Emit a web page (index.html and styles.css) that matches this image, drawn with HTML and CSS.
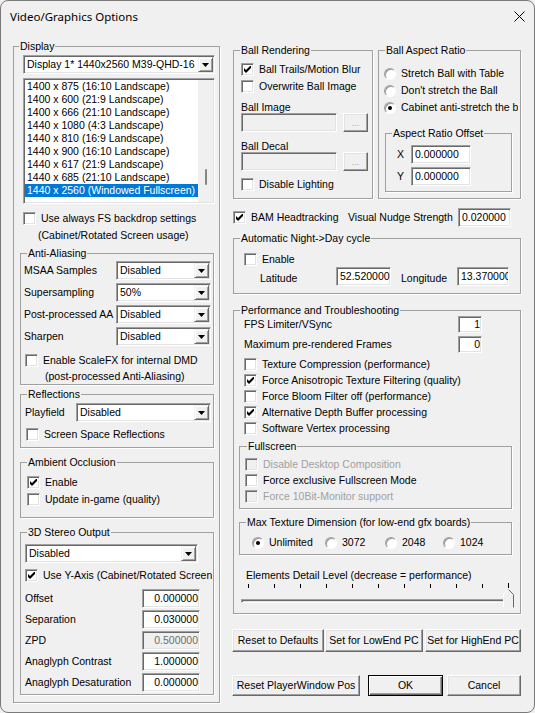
FILE: index.html
```html
<!DOCTYPE html>
<html>
<head>
<meta charset="utf-8">
<title>Video/Graphics Options</title>
<link rel="stylesheet" href="styles.css">
</head>
<body>
<div class="window">
  <div class="titlebar">
    <span class="title">Video/Graphics Options</span>
    <svg class="close" width="11" height="11" viewBox="0 0 11 11"><path d="M0.5 0.5 L10.5 10.5 M10.5 0.5 L0.5 10.5" stroke="#000" stroke-width="1" fill="none"/></svg>
  </div>
  <div class="client">
    <!-- LEFT COLUMN -->
    <div class="leftcol">
      <fieldset class="gb g-display">
        <legend class="lg-display">Display</legend>
        <div class="disp-body">
          <div class="combo c-display"><span class="combo-text">Display 1* 1440x2560 M39-QHD-16</span><span class="combo-btn"><svg width="7" height="4" viewBox="0 0 7 4"><polygon points="0,0 7,0 3.5,4" fill="#000"/></svg></span></div>
          <div class="listbox">
            <div class="list-items">
              <div class="li">1400 x 875 (16:10 Landscape)</div>
              <div class="li">1400 x 600 (21:9 Landscape)</div>
              <div class="li">1400 x 666 (21:10 Landscape)</div>
              <div class="li">1440 x 1080 (4:3 Landscape)</div>
              <div class="li">1440 x 810 (16:9 Landscape)</div>
              <div class="li">1440 x 900 (16:10 Landscape)</div>
              <div class="li">1440 x 617 (21:9 Landscape)</div>
              <div class="li">1440 x 685 (21:10 Landscape)</div>
              <div class="li sel">1440 x 2560 (Windowed Fullscreen)</div>
            </div>
            <div class="vscroll"><div class="vthumb"></div></div>
          </div>
          <div class="cb cb-fs"><span class="box"></span><span class="lbl">Use always FS backdrop settings</span></div>
          <div class="note note-fs">(Cabinet/Rotated Screen usage)</div>

          <fieldset class="gb g-aa">
            <legend>Anti-Aliasing</legend>
            <div class="aa-body">
              <div class="frow"><span class="flabel w92">MSAA Samples</span><div class="combo w95"><span class="combo-text">Disabled</span><span class="combo-btn"><svg width="7" height="4" viewBox="0 0 7 4"><polygon points="0,0 7,0 3.5,4" fill="#000"/></svg></span></div></div>
              <div class="frow"><span class="flabel w92">Supersampling</span><div class="combo w95"><span class="combo-text">50%</span><span class="combo-btn"><svg width="7" height="4" viewBox="0 0 7 4"><polygon points="0,0 7,0 3.5,4" fill="#000"/></svg></span></div></div>
              <div class="frow"><span class="flabel w92">Post-processed AA</span><div class="combo w95"><span class="combo-text">Disabled</span><span class="combo-btn"><svg width="7" height="4" viewBox="0 0 7 4"><polygon points="0,0 7,0 3.5,4" fill="#000"/></svg></span></div></div>
              <div class="frow"><span class="flabel w92">Sharpen</span><div class="combo w95"><span class="combo-text">Disabled</span><span class="combo-btn"><svg width="7" height="4" viewBox="0 0 7 4"><polygon points="0,0 7,0 3.5,4" fill="#000"/></svg></span></div></div>
              <div class="cb cb-scalefx"><span class="box"></span><span class="lbl">Enable ScaleFX for internal DMD</span></div>
              <div class="note note-scalefx">(post-processed Anti-Aliasing)</div>
            </div>
          </fieldset>

          <fieldset class="gb g-refl">
            <legend>Reflections</legend>
            <div class="refl-body">
              <div class="frow"><span class="flabel w51">Playfield</span><div class="combo w135"><span class="combo-text">Disabled</span><span class="combo-btn"><svg width="7" height="4" viewBox="0 0 7 4"><polygon points="0,0 7,0 3.5,4" fill="#000"/></svg></span></div></div>
              <div class="cb cb-ssr"><span class="box"></span><span class="lbl">Screen Space Reflections</span></div>
            </div>
          </fieldset>

          <fieldset class="gb g-ao">
            <legend>Ambient Occlusion</legend>
            <div class="ao-body">
              <div class="cb"><span class="box"><svg class="chk" width="7" height="7" viewBox="0 0 7 7"><polygon points="0,2 2,4 7,-1 7,2 2,7 0,5" fill="#000"/></svg></span><span class="lbl">Enable</span></div>
              <div class="cb mt4"><span class="box"></span><span class="lbl">Update in-game (quality)</span></div>
            </div>
          </fieldset>

          <fieldset class="gb g-3d">
            <legend>3D Stereo Output</legend>
            <div class="s3d-body">
              <div class="combo w173"><span class="combo-text">Disabled</span><span class="combo-btn"><svg width="7" height="4" viewBox="0 0 7 4"><polygon points="0,0 7,0 3.5,4" fill="#000"/></svg></span></div>
              <div class="cb cb-yaxis"><span class="box"><svg class="chk" width="7" height="7" viewBox="0 0 7 7"><polygon points="0,2 2,4 7,-1 7,2 2,7 0,5" fill="#000"/></svg></span><span class="lbl">Use Y-Axis (Cabinet/Rotated Screen usage)</span></div>
              <div class="frow srow first"><span class="flabel w117">Offset</span><div class="edit r w58">0.000000</div></div>
              <div class="frow srow"><span class="flabel w117">Separation</span><div class="edit r w58">0.030000</div></div>
              <div class="frow srow"><span class="flabel w117">ZPD</span><div class="edit r w58 dis">0.500000</div></div>
              <div class="frow srow"><span class="flabel w117">Anaglyph Contrast</span><div class="edit r w58">1.000000</div></div>
              <div class="frow srow"><span class="flabel w117">Anaglyph Desaturation</span><div class="edit r w58">0.000000</div></div>
            </div>
          </fieldset>
        </div>
      </fieldset>
    </div>

    <!-- RIGHT COLUMN -->
    <div class="rightcol">
      <div class="toprow">
        <fieldset class="gb g-ball">
          <legend>Ball Rendering</legend>
          <div class="ball-body">
            <div class="cb"><span class="box"><svg class="chk" width="7" height="7" viewBox="0 0 7 7"><polygon points="0,2 2,4 7,-1 7,2 2,7 0,5" fill="#000"/></svg></span><span class="lbl">Ball Trails/Motion Blur</span></div>
            <div class="cb mt4"><span class="box"></span><span class="lbl">Overwrite Ball Image</span></div>
            <div class="blabel mt8">Ball Image</div>
            <div class="filerow"><div class="edit dis w96"></div><div class="btn dots">...</div></div>
            <div class="blabel mt8">Ball Decal</div>
            <div class="filerow"><div class="edit dis w96"></div><div class="btn dots">...</div></div>
            <div class="cb mt7"><span class="box"></span><span class="lbl">Disable Lighting</span></div>
          </div>
        </fieldset>
        <fieldset class="gb g-aspect">
          <legend>Ball Aspect Ratio</legend>
          <div class="aspect-body">
            <div class="rb"><span class="radio"></span><span class="lbl">Stretch Ball with Table</span></div>
            <div class="rb mt4"><span class="radio"></span><span class="lbl">Don't stretch the Ball</span></div>
            <div class="rb mt4 rb-clip"><span class="radio on"></span><span class="lbl">Cabinet anti-stretch the ball</span></div>
            <fieldset class="gb g-aro">
              <legend>Aspect Ratio Offset</legend>
              <div class="aro-body">
                <div class="frow"><span class="flabel w14">X</span><div class="edit w60">0.000000</div></div>
                <div class="frow mt3"><span class="flabel w14">Y</span><div class="edit w60">0.000000</div></div>
              </div>
            </fieldset>
          </div>
        </fieldset>
      </div>

      <div class="frow bamrow">
        <div class="cb w115"><span class="box"><svg class="chk" width="7" height="7" viewBox="0 0 7 7"><polygon points="0,2 2,4 7,-1 7,2 2,7 0,5" fill="#000"/></svg></span><span class="lbl">BAM Headtracking</span></div>
        <span class="flabel w110">Visual Nudge Strength</span>
        <div class="edit w53">0.020000</div>
      </div>

      <fieldset class="gb g-night">
        <legend>Automatic Night-&gt;Day cycle</legend>
        <div class="night-body">
          <div class="cb"><span class="box"></span><span class="lbl">Enable</span></div>
          <div class="latrow">
            <span class="flabel lat-l">Latitude</span>
            <div class="edit w55">52.520000</div>
            <span class="flabel lon-l">Longitude</span>
            <div class="edit w52">13.370000</div>
          </div>
        </div>
      </fieldset>

      <fieldset class="gb g-perf">
        <legend>Performance and Troubleshooting</legend>
        <div class="perf-body">
          <div class="prow"><span class="flabel w214">FPS Limiter/VSync</span><div class="edit r small w24">1</div></div>
          <div class="prow mt3"><span class="flabel w214">Maximum pre-rendered Frames</span><div class="edit r small w24">0</div></div>
          <div class="cb pcb mt5"><span class="box"></span><span class="lbl">Texture Compression (performance)</span></div>
          <div class="cb pcb mt3"><span class="box"><svg class="chk" width="7" height="7" viewBox="0 0 7 7"><polygon points="0,2 2,4 7,-1 7,2 2,7 0,5" fill="#000"/></svg></span><span class="lbl">Force Anisotropic Texture Filtering (quality)</span></div>
          <div class="cb pcb mt3"><span class="box"></span><span class="lbl">Force Bloom Filter off (performance)</span></div>
          <div class="cb pcb mt3"><span class="box"><svg class="chk" width="7" height="7" viewBox="0 0 7 7"><polygon points="0,2 2,4 7,-1 7,2 2,7 0,5" fill="#000"/></svg></span><span class="lbl">Alternative Depth Buffer processing</span></div>
          <div class="cb pcb mt3"><span class="box"></span><span class="lbl">Software Vertex processing</span></div>

          <fieldset class="gb g-fs">
            <legend class="lg-fs">Fullscreen</legend>
            <div class="fs-body">
              <div class="cb disabled"><span class="box dis"></span><span class="lbl">Disable Desktop Composition</span></div>
              <div class="cb mt3"><span class="box"></span><span class="lbl">Force exclusive Fullscreen Mode</span></div>
              <div class="cb mt3 disabled"><span class="box dis"></span><span class="lbl">Force 10Bit-Monitor support</span></div>
            </div>
          </fieldset>

          <fieldset class="gb g-mtd">
            <legend>Max Texture Dimension (for low-end gfx boards)</legend>
            <div class="mtd-body">
              <div class="rb w73"><span class="radio on"></span><span class="lbl">Unlimited</span></div>
              <div class="rb w60"><span class="radio"></span><span class="lbl">3072</span></div>
              <div class="rb w58"><span class="radio"></span><span class="lbl">2048</span></div>
              <div class="rb"><span class="radio"></span><span class="lbl">1024</span></div>
            </div>
          </fieldset>

          <div class="edl">Elements Detail Level (decrease = performance)</div>
          <div class="slider">
            <div class="ticks">
              <span class="tick"></span><span class="tick"></span><span class="tick"></span><span class="tick"></span><span class="tick"></span><span class="tick"></span><span class="tick"></span><span class="tick"></span><span class="tick"></span><span class="tick"></span><span class="tick last"></span>
            </div>
            <div class="track"></div>
            <svg class="sthumb" width="11" height="19" viewBox="0 0 11 19">
              <path d="M0.5 18.5 V5.5 L5.5 0.5 L10.5 5.5 V18.5 Z" fill="#f0f0f0"/>
              <path d="M0.5 18.5 V5.5 L5.5 0.5" stroke="#fff" fill="none"/>
              <path d="M5.5 0.5 L10.5 5.5 V18.5" stroke="#696969" fill="none"/>
            </svg>
          </div>
        </div>
      </fieldset>

      <div class="btnrow row1">
        <div class="btn b92">Reset to Defaults</div>
        <div class="btn b98">Set for LowEnd PC</div>
        <div class="btn b96">Set for HighEnd PC</div>
      </div>
      <div class="btnrow row2">
        <div class="btn b128">Reset PlayerWindow Pos</div>
        <div class="btn def b75">OK</div>
        <div class="btn b74">Cancel</div>
      </div>
    </div>
  </div>
</div>
</body>
</html>
```

FILE: styles.css
```css
* { box-sizing: border-box; }
html, body { margin: 0; padding: 0; }
body {
  font-family: "Liberation Sans", Arial, sans-serif;
  font-size: 10.5px;
  line-height: 13px;
  color: #000;
  background: #f0f0f0;
}

.window {
  width: 535px;
  height: 713px;
  border: 1px solid #7a7a7a;
  border-radius: 8px;
  background: #f0f0f0;
  overflow: hidden;
}

.titlebar {
  height: 30px;
  display: flex;
  align-items: center;
  justify-content: space-between;
  padding: 0 9px 0 9px;
}
.title {
  font-family: "Noto Sans", "Open Sans", sans-serif;
  font-size: 11.5px;
  line-height: 16px;
  margin-top: 1px;
}
.close { display: block; margin-top: 1px; }

.client {
  display: flex;
  padding-left: 12px;
  gap: 13px;
}
.leftcol { width: 207px; margin-top: 9px; }
.rightcol { width: 289px; margin-top: 13px; }

/* group boxes */
.gb {
  margin: 0;
  padding: 0;
  border: 1px solid #a0a0a0;
  min-width: 0;
  display: block;
  box-shadow: 1px 1px 0 #fff;
}
.gb > legend {
  padding: 0 1px;
  margin-left: 6px;
  line-height: 12px;
  height: 12px;
  font-size: 10.5px;
  white-space: nowrap;
}
.gb > legend.lg-display { margin-left: 5px; }
.gb > legend.lg-fs { margin-left: 7px; }

/* common controls */
.cb, .rb {
  display: flex;
  align-items: center;
  height: 13px;
  white-space: nowrap;
}
.cb .lbl, .rb .lbl { margin-left: 5px; line-height: 13px; margin-top: -1px; }
.cb.disabled .lbl { color: #a0a0a0; }

.box {
  width: 13px;
  height: 13px;
  flex: none;
  background: #fff;
  border: 1px solid;
  border-color: #a0a0a0 #fff #fff #a0a0a0;
  box-shadow: inset 1px 1px 0 #696969, inset -1px -1px 0 #e3e3e3;
  display: flex;
  align-items: center;
  justify-content: center;
}
.box.dis { background: #f0f0f0; }
.chk { display: block; }

.radio {
  width: 12px;
  height: 12px;
  flex: none;
  border-radius: 50%;
  background: #fff;
  border: 1px solid;
  border-color: #a0a0a0 #fff #fff #a0a0a0;
  box-shadow: inset 1px 1px 0 #9a9a9a;
  display: flex;
  align-items: center;
  justify-content: center;
}
.radio.on::after {
  content: "";
  width: 4px;
  height: 4px;
  border-radius: 50%;
  background: #000;
}

.edit {
  height: 19px;
  background: #fff;
  border: 1px solid;
  border-color: #a0a0a0 #fff #fff #a0a0a0;
  box-shadow: inset 1px 1px 0 #696969, inset -1px -1px 0 #e3e3e3;
  padding: 0 1px 0 3px;
  line-height: 17px;
  overflow: hidden;
  white-space: nowrap;
  flex: none;
}
.edit.r { text-align: right; padding: 0 1px 0 1px; }
.edit.dis { background: #f0f0f0; color: #6d6d6d; }
.edit.small { height: 17px; line-height: 15px; }

.combo {
  height: 19px;
  display: flex;
  background: #fff;
  border: 1px solid;
  border-color: #a0a0a0 #fff #fff #a0a0a0;
  box-shadow: inset 1px 1px 0 #696969, inset -1px -1px 0 #e3e3e3;
  padding: 1px;
  flex: none;
}
.combo-text {
  flex: 1;
  min-width: 0;
  padding-left: 2px;
  line-height: 15px;
  overflow: hidden;
  white-space: nowrap;
}
.combo-btn {
  width: 15px;
  height: 15px;
  flex: none;
  background: #f0f0f0;
  border: 1px solid;
  border-color: #f0f0f0 #696969 #696969 #f0f0f0;
  box-shadow: inset 1px 1px 0 #fff, inset -1px -1px 0 #a0a0a0;
  display: flex;
  align-items: center;
  justify-content: center;
}
.combo-btn svg { display: block; }

.btn {
  height: 23px;
  background: #f0f0f0;
  border: 1px solid;
  border-color: #fff #696969 #696969 #fff;
  box-shadow: inset -1px -1px 0 #a0a0a0, inset 1px 1px 0 #e3e3e3;
  display: flex;
  align-items: center;
  justify-content: center;
  white-space: nowrap;
  flex: none;
}
.btn.def {
  border-color: #000;
  box-shadow: inset 1px 1px 0 #fff, inset -1px -1px 0 #696969, inset -2px -2px 0 #a0a0a0;
}

.frow { display: flex; align-items: center; height: 19px; }
.flabel { white-space: nowrap; flex: none; }

/* widths */
.w14 { width: 14px; }
.w24 { width: 24px; }
.w51 { width: 51px; }
.w52 { width: 52px; }
.w53 { width: 53px; }
.w55 { width: 55px; }
.w58 { width: 58px; }
.w60 { width: 60px; }
.w73 { width: 73px; }
.w92 { width: 92px; }
.w95 { width: 95px; }
.w96 { width: 96px; }
.w110 { width: 110px; }
.w115 { width: 115px; }
.w117 { width: 117px; }
.w135 { width: 135px; }
.w173 { width: 173px; }
.w214 { width: 214px; }

.mt3 { margin-top: 3px; }
.mt4 { margin-top: 4px; }
.mt5 { margin-top: 5px; }
.mt7 { margin-top: 7px; }
.mt8 { margin-top: 8px; }

/* ===== Left column ===== */
.g-display { width: 207px; height: 663px; }
.disp-body { padding: 3px 0 0 6px; }
.c-display { width: 192px; margin-left: 3px; }

.listbox {
  width: 192px;
  height: 126px;
  margin: 4px 0 0 3px;
  background: #fff;
  border: 1px solid;
  border-color: #a0a0a0 #fff #fff #a0a0a0;
  box-shadow: inset 1px 1px 0 #696969, inset -1px -1px 0 #e3e3e3;
  padding: 1px;
  display: flex;
}
.list-items { flex: 1; min-width: 0; }
.li { height: 13px; line-height: 13px; padding-left: 2px; white-space: nowrap; overflow: hidden; }
.li.sel { background: #0078d7; color: #fff; }
.vscroll { width: 15px; flex: none; background: #f0f0f0; }
.vthumb { width: 2px; height: 16px; margin: 89px 0 0 7px; background: #858585; border-radius: 1px; }

.cb-fs { margin: 8px 0 0 3px; }
.note { white-space: nowrap; height: 13px; }
.note-fs { margin: 4px 0 0 18px; }

.g-aa { width: 194px; height: 138px; margin-top: 5px; }
.aa-body { padding: 2px 0 0 3px; }
.aa-body .frow + .frow { margin-top: 3px; }
.cb-scalefx { margin: 8px 0 0 1px; }
.note-scalefx { margin: 3px 0 0 21px; }

.g-refl { width: 194px; height: 60px; margin-top: 3px; }
.refl-body { padding: 3px 0 0 4px; }
.cb-ssr { margin: 6px 0 0 1px; }

.g-ao { width: 194px; height: 62px; margin-top: 8px; }
.ao-body { padding: 8px 0 0 6px; }

.g-3d { width: 194px; height: 169px; margin-top: 8px; }
.s3d-body { padding: 6px 0 0 4px; }
.cb-yaxis { margin-top: 6px; width: 187px; overflow: hidden; }
.srow { margin-top: 2px; }
.srow.first { margin-top: 7px; }

/* ===== Right column ===== */
.toprow { display: flex; gap: 5px; }
.g-ball { width: 140px; height: 155px; }
.ball-body { padding: 7px 0 0 7px; }
.blabel { line-height: 12px; height: 12px; white-space: nowrap; }
.filerow { display: flex; }
.dots {
  width: 25px;
  height: 19px;
  margin-left: 6px;
  color: #a0a0a0;
  align-items: flex-end;
  padding-bottom: 3px;
  font-size: 9px;
  line-height: 9px;
}

.g-aspect { width: 143px; height: 155px; }
.aspect-body { padding: 11px 0 0 5px; }
.rb-clip { width: 134px; overflow: hidden; }
.g-aro { width: 127px; height: 65px; margin: 13px 0 0 1px; }
.aro-body { padding: 6px 0 0 11px; }

.bamrow { margin-top: 9px; }

.g-night { width: 288px; height: 62px; margin-top: 5px; }
.night-body { padding: 9px 0 0 10px; }
.latrow { display: flex; align-items: flex-start; height: 19px; margin-top: 1px; }
.lat-l { margin: 5px 0 0 16px; width: 76px; }
.lon-l { margin: 5px 0 0 10px; width: 56px; }

.g-perf { width: 288px; height: 310px; margin-top: 10px; }
.perf-body { padding: 0 0 0 5px; }
.prow { display: flex; align-items: center; height: 17px; margin-left: 5px; }
.pcb { margin-left: 5px; }

.g-fs { width: 273px; height: 69px; margin-top: 5px; }
.fs-body { padding: 6px 0 0 5px; }

.g-mtd { width: 273px; height: 39px; margin-top: 7px; }
.mtd-body { padding: 8px 0 0 12px; display: flex; }

.edl { margin: 14px 0 0 7px; white-space: nowrap; height: 13px; }
.slider {
  position: relative;
  width: 272px;
  height: 26px;
  margin: 1px 0 0 2px;
}
.ticks {
  display: flex;
  justify-content: space-between;
  align-items: flex-start;
  width: 261px;
  height: 5px;
  margin-left: 7px;
}
.tick { width: 1px; height: 4px; background: #000; margin-top: 1px; }
.tick.last { height: 5px; margin-top: 0; }
.track {
  width: 269px;
  height: 4px;
  margin-top: 11px;
  border: 1px solid;
  border-color: #a0a0a0 #fff #fff #a0a0a0;
  box-shadow: inset 1px 1px 0 #696969;
  background: #e3e3e3;
}
.sthumb { position: absolute; left: 262px; top: 6px; display: block; }

.btnrow { display: flex; margin-left: -1px; }
.row1 { margin-top: 15px; }
.row2 { margin-top: 23px; }
.row2 .btn { height: 21px; }
.b92 { width: 92px; }
.b98 { width: 98px; margin-left: 1px; }
.b96 { width: 96px; margin-left: 2px; }
.b128 { width: 128px; }
.b75 { width: 75px; margin-left: 8px; }
.b74 { width: 74px; margin-left: 4px; }
```
